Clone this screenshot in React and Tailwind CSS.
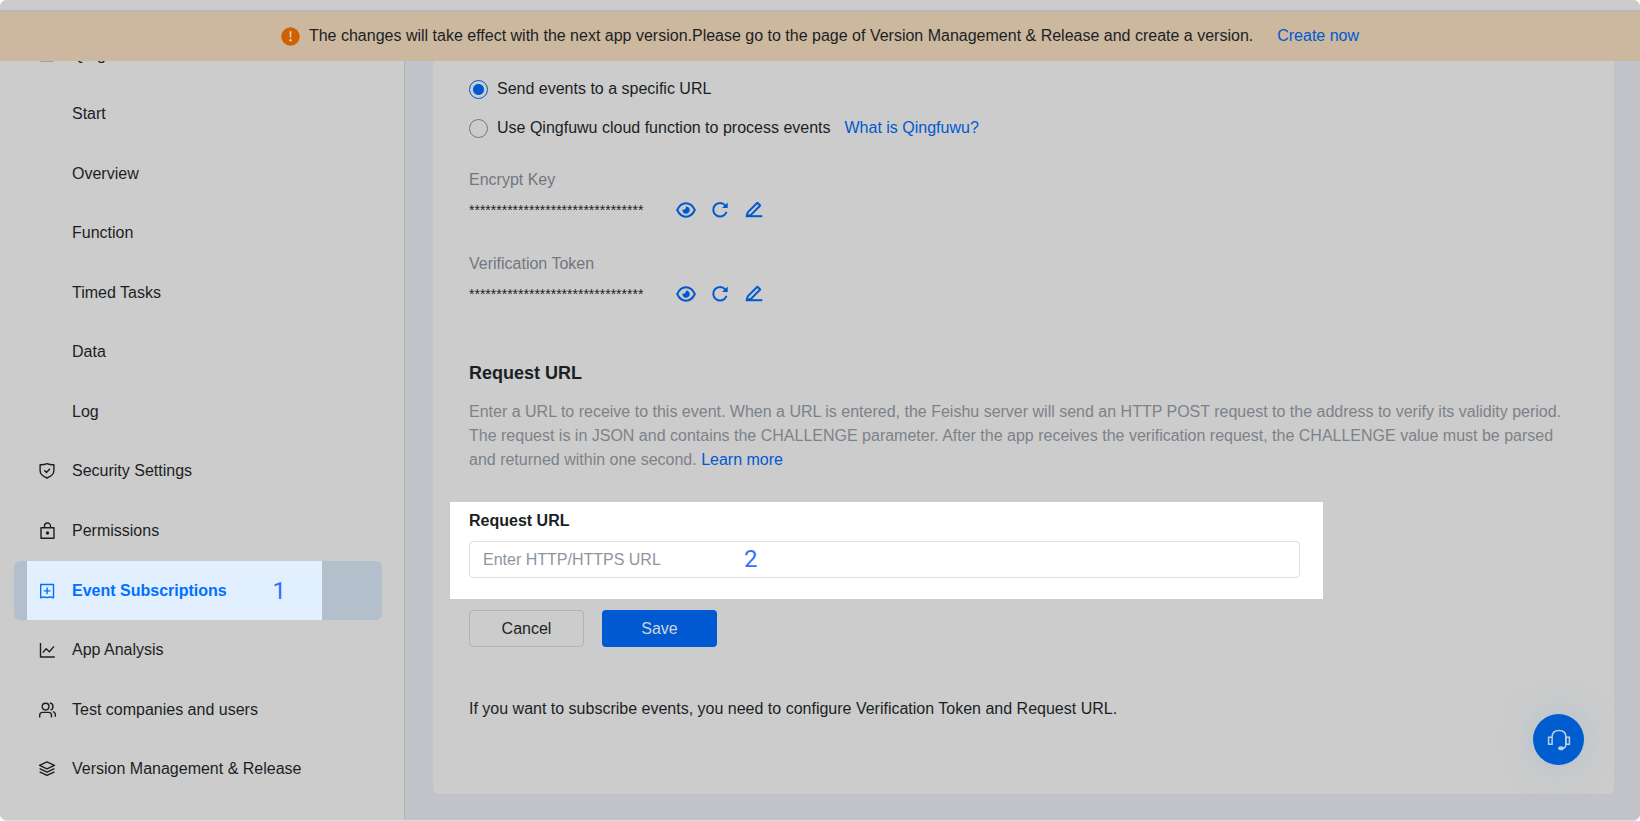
import React from "react";

const stroke = {
  fill: "none",
  stroke: "currentColor",
  strokeWidth: 1.4,
  strokeLinejoin: "round",
};

const icons = {
  cloud: (
    <path d="M3 3h12v11.500H3z" />
  ),
  shield: (
    <>
      <path d="M9 1.600c2 1 4.300 1.300 6.900 1.200v5.600c0 3.600-2.700 5.900-6.900 7.600-4.200-1.700-6.900-4-6.900-7.600V2.800C4.700 2.900 7 2.600 9 1.600z" />
      <path d="M6.200 8.300l2.300 2.200 3.400-3.800" />
    </>
  ),
  lock: (
    <>
      <path d="M3 5.700h13v10.600H3z" />
      <path d="M6.500 5.700V4a3 3 0 0 1 6 0v1.700" />
      <circle cx="9.500" cy="11" r="1.700" fill="currentColor" stroke="none" />
    </>
  ),
  event: (
    <>
      <path d="M2.700 2.500h12.800v13.300c-2.400-1.200-4.300-1.200-6.400-.1-2.100-1.100-4-1.100-6.400.1z" />
      <path d="M9.100 5.600v6.600M5.800 8.900h6.600" />
    </>
  ),
  chart: (
    <>
      <path d="M2.500 2v14h14.300" />
      <path d="M4.800 11.600l3.300-3.800 3.300 3 4.600-5.400" />
    </>
  ),
  users: (
    <>
      <circle cx="7.600" cy="5.600" r="3.400" />
      <path d="M1.700 16.500v-2.200c0-1.700 1.200-2.900 2.900-2.900h6c1.700 0 2.900 1.200 2.900 2.900v2.200" />
      <path d="M11.800 2c2 .2 3.200 1.600 3.200 3.400s-1.200 3.200-2.600 3.500M14.800 10.600c1.700.4 2.600 1.500 2.600 3.200v2" />
    </>
  ),
  layers: (
    <>
      <path d="M9 1.900l7.400 3.500L9 8.900 1.600 5.400z" />
      <path d="M1.600 8.600L9 12.100l7.400-3.500M1.600 11.800L9 15.300l7.400-3.500" />
    </>
  ),
};

const items = [
  { label: "Qingfuwu", icon: "cloud" },
  { label: "Start" },
  { label: "Overview" },
  { label: "Function" },
  { label: "Timed Tasks" },
  { label: "Data" },
  { label: "Log" },
  { label: "Security Settings", icon: "shield" },
  { label: "Permissions", icon: "lock" },
  { label: "Event Subscriptions", icon: "event", active: true },
  { label: "App Analysis", icon: "chart" },
  { label: "Test companies and users", icon: "users" },
  { label: "Version Management & Release", icon: "layers" },
];

function NavItem({ item }) {
  const icon = (
    <span className="w-[34px] shrink-0">
      {item.icon && (
        <svg className="size-[18px]" viewBox="0 0 18 18" {...stroke} aria-hidden="true">
          {icons[item.icon]}
        </svg>
      )}
    </span>
  );
  if (item.active) {
    return (
      <li className="flex flex-1 rounded-md bg-[#b4bfcc] pl-[13px]">
        <a
          href="#event-subscriptions"
          aria-current="page"
          className="flex w-[295px] items-center bg-[#e1efff] pl-[11px] font-bold text-[#0070ff]"
        >
          {icon}
          {item.label}
          <span className="ml-auto mr-9 font-[Roboto,sans-serif] text-2xl font-normal text-[#3370ff]">1</span>
        </a>
      </li>
    );
  }
  return (
    <li className="flex flex-1 pl-6">
      <a href="#section" className="flex items-center">
        {icon}
        {item.label}
      </a>
    </li>
  );
}

function IconButton({ label, children }) {
  return (
    <button type="button" aria-label={label} className="text-[#0059d0]">
      <svg className="size-5" viewBox="0 0 20 20" fill="none" stroke="currentColor" strokeWidth="2" aria-hidden="true">
        {children}
      </svg>
    </button>
  );
}

function Secret({ label }) {
  return (
    <div>
      <div className="leading-6 text-[#72777e]">{label}</div>
      <div className="mt-0.5 flex h-8 items-center">
        <span className="w-[207px] text-sm">********************************</span>
        <div className="flex gap-[14px]">
          <IconButton label={"Show " + label}>
            <path d="M1.200 10C3.200 5.700 6.200 3.300 10 3.300s6.800 2.400 8.800 6.700c-2 4.300-5 6.700-8.800 6.700S3.200 14.300 1.200 10z" />
            <path d="M10 6.400a3.700 3.700 0 1 1-3.600 3.200c1.900.7 3.700-.9 3.600-3.200z" fill="currentColor" stroke="none" />
          </IconButton>
          <IconButton label={"Refresh " + label}>
            <path d="M16.200 12.600A6.800 6.800 0 1 1 15.200 5.300" strokeLinecap="round" />
            <path d="M17.700 2.500v5.600h-5.600z" fill="currentColor" stroke="none" />
          </IconButton>
          <IconButton label={"Edit " + label}>
            <path d="M2.600 16.200l1.300-4.100 9.500-9.400 2.800 2.800-9.300 9.400-4.300 1.300z" strokeLinejoin="round" />
            <path d="M2 16.200h16.300" />
          </IconButton>
        </div>
      </div>
    </div>
  );
}

const radio =
  "size-[19px] shrink-0 appearance-none rounded-full border border-[#72777e] checked:border-[#0059d0] checked:bg-[radial-gradient(circle,#0059d0_5px,transparent_6px)]";

export default function App() {
  return (
    <div className="flex min-h-screen flex-col overflow-hidden rounded-[7px] border-b border-[#dcdcde] bg-[#ccc] font-['Liberation_Sans',Arial,sans-serif] text-base text-[#1b1f24]">
      <header className="relative shrink-0">
        <div className="h-3 border-b-2 border-[#b6b8ba] bg-[#ccc]" />
        <div role="status" className="flex h-[49px] items-center justify-center bg-[#cbb89f] pb-px">
          <svg className="mr-[9px] size-[19px]" viewBox="0 0 19 19" aria-hidden="true">
            <circle cx="9.500" cy="9.500" r="9.200" fill="#d06000" />
            <path d="M8.500 4.300h2l-.4 6.400H8.900z" fill="#ddd0c0" />
            <circle cx="9.500" cy="13.300" r="1.200" fill="#ddd0c0" />
          </svg>
          <span>
            The changes will take effect with the next app version.Please go to the page of Version Management &amp; Release and create a version.
          </span>
          <a href="#create" className="ml-6 text-[#0059d0]">
            Create now
          </a>
        </div>
      </header>

      <div className="flex flex-1 overflow-hidden">
        <nav aria-label="App settings" className="flex w-[405px] shrink-0 flex-col border-r border-[#b0b3b7] pb-[21px] pl-[14px] pr-[22px]">
          <ul className="-mt-9 flex flex-1 flex-col">
            {items.map((item) => (
              <NavItem key={item.label} item={item} />
            ))}
          </ul>
        </nav>

        <div className="flex min-w-0 flex-1 bg-[#c2c3c8] pb-[26px] pl-7 pr-[26px]">
          <main className="min-w-0 flex-1 rounded-b-md bg-[#ccc] px-9 pt-4">
            <div className="flex flex-col gap-[15px]">
              <label className="flex h-6 items-center gap-[9px]">
                <input type="radio" name="delivery" defaultChecked className={radio} />
                Send events to a specific URL
              </label>
              <div className="flex h-6 items-center">
                <label className="flex items-center gap-[9px]">
                  <input type="radio" name="delivery" className={radio} />
                  Use Qingfuwu cloud function to process events
                </label>
                <a href="#qingfuwu" className="ml-[14px] text-[#0059d0]">
                  What is Qingfuwu?
                </a>
              </div>
            </div>

            <div className="mt-7 flex flex-col gap-[26px]">
              <Secret label="Encrypt Key" />
              <Secret label="Verification Token" />
            </div>

            <h2 className="mt-[49px] text-lg font-bold">Request URL</h2>
            <p className="mt-[13px] leading-6 text-[#7d8288]">
              Enter a URL to receive to this event. When a URL is entered, the Feishu server will send an HTTP POST request to the address to verify its validity period. The request is in JSON and contains the CHALLENGE parameter. After the app receives the verification request, the CHALLENGE value must be parsed and returned within one second.{" "}
              <a href="#learn" className="text-[#0059d0]">
                Learn more
              </a>
            </p>

            <div className="relative -ml-[19px] mt-[30px] h-[97px] max-w-[873px] bg-white pl-[19px] pr-[23px] pt-[7px]">
              <label htmlFor="request-url" className="block leading-6 font-bold">
                Request URL
              </label>
              <input
                id="request-url"
                type="text"
                placeholder="Enter HTTP/HTTPS URL"
                className="mt-2 block h-[37px] w-full rounded border border-[#dee0e3] bg-white px-[13px] placeholder:text-[#8f959e]"
              />
              <span className="absolute left-[294px] top-[41px] font-[Roboto,sans-serif] text-2xl text-[#3370ff]">2</span>
            </div>

            <div className="mt-[11px] flex gap-[18px]">
              <button type="button" className="h-[37px] w-[115px] rounded border border-[#b0b2b5]">
                Cancel
              </button>
              <button type="button" className="h-[37px] w-[115px] rounded bg-[#0059d0] text-[#ccd6e2]">
                Save
              </button>
            </div>

            <p className="mt-[50px] leading-6">
              If you want to subscribe events, you need to configure Verification Token and Request URL.
            </p>
          </main>
        </div>
      </div>

      <button
        type="button"
        aria-label="Contact support"
        className="fixed bottom-14 right-14 flex size-[51px] items-center justify-center rounded-full bg-[#005dd0] text-[#bdd0e0] shadow-[0_0_36px_rgba(140,175,205,0.4)]"
      >
        <svg className="size-[24px]" viewBox="0 0 24 24" fill="none" stroke="currentColor" strokeWidth="1.500" aria-hidden="true">
          <path d="M1.600 9.200h3.500v7H1.600zM18.900 9.200h3.500v7h-3.500z" />
          <path d="M5.100 9.200C5.100 5 7.800 2.600 12 2.600S18.900 5 18.900 9.200v7c0 2.500-1.500 4.200-4.300 4.500" />
          <ellipse cx="14" cy="20.300" rx="2.100" ry="1.300" fill="currentColor" />
        </svg>
      </button>
    </div>
  );
}
